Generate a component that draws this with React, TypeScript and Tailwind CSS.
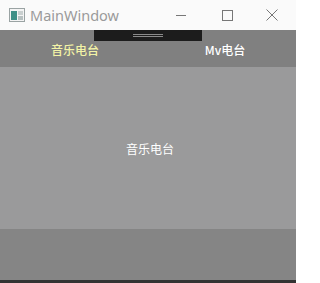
import React from "react";

function WindowIcon() {
  return (
    <svg width="16" height="14" viewBox="0 0 16 14" className="shrink-0">
      <rect x="0.5" y="0.5" width="15" height="13" fill="#f4f4f4" stroke="#9aa3a3" />
      <rect x="2" y="3" width="6" height="9" fill="#3f8f86" />
      <rect x="9" y="3" width="5" height="4" fill="#c9cfcf" />
      <rect x="9" y="8" width="5" height="4" fill="#b7c0c0" />
    </svg>
  );
}

export default function App() {
  return (
    <div className="w-[296px] h-[283px] flex flex-col overflow-hidden bg-[#333333] font-['Microsoft_YaHei','Noto_Sans_CJK_SC',sans-serif]">
      {/* title bar */}
      <div className="h-[30px] shrink-0 bg-[#fafafa] flex items-center pl-[9px] text-[#9a9a9a]">
        <WindowIcon />
        <span className="ml-[5px] text-[14.5px] font-['Noto_Sans','Noto_Sans_CJK_SC',sans-serif] leading-none">
          MainWindow
        </span>
        <div className="ml-auto flex items-center h-full">
          <div className="w-[46px] h-full flex items-center justify-center">
            <div className="w-[10px] h-px bg-[#777]" />
          </div>
          <div className="w-[46px] h-full flex items-center justify-center">
            <div className="w-[11px] h-[11px] border border-[#777]" />
          </div>
          <div className="w-[46px] h-full flex items-center justify-center pr-[2px]">
            <svg width="12" height="12" viewBox="0 0 12 12">
              <path d="M0.5 0.5 L11.5 11.5 M11.5 0.5 L0.5 11.5" stroke="#777" strokeWidth="1" />
            </svg>
          </div>
        </div>
      </div>

      {/* tab bar */}
      <div className="relative h-[37px] shrink-0 bg-[#808080] flex text-[12px] font-medium">
        <div className="absolute left-[94px] top-0 w-[108px] h-[11px] bg-[#1c1c1c] flex flex-col items-center justify-center gap-px">
          <div className="w-[30px] h-px bg-[#8a8a8a]" />
          <div className="w-[30px] h-px bg-[#8a8a8a]" />
        </div>
        <button className="flex-1 flex items-center justify-center pt-[2px] pl-[4px] text-[#f3f3a6]">
          音乐电台
        </button>
        <button className="flex-1 flex items-center justify-center pt-[2px] pl-[8px] text-white">
          Mv电台
        </button>
      </div>

      {/* content */}
      <div className="h-[162px] shrink-0 bg-[#9a9a9b] flex items-center justify-center pt-[2px] pl-[4px] text-[12px] text-white">
        音乐电台
      </div>

      {/* bottom bar */}
      <div className="h-[51px] shrink-0 bg-[#858585]" />
    </div>
  );
}
